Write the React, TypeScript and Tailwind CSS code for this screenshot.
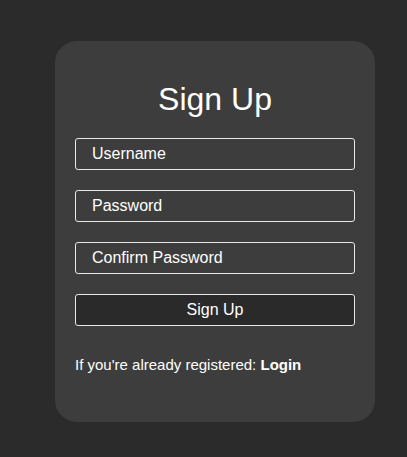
export default function App() {
  return (
    <div
      className="min-h-screen bg-[#2b2b2b] pt-[41px] pl-[55px]"
      style={{ fontFamily: '"Liberation Sans", Arial, sans-serif' }}
    >
      <form className="w-[320px] h-[381px] rounded-[22px] bg-[#3d3d3d] px-5 pt-10 flex flex-col">
        <h1 className="text-[32px] leading-[37px] text-center text-white">Sign Up</h1>
        <input
          type="text"
          placeholder="Username"
          className="mt-5 h-8 w-full rounded-[3px] border border-[#e8e8e8] bg-transparent pl-4 text-base text-white placeholder:text-white outline-none"
        />
        <input
          type="password"
          placeholder="Password"
          className="mt-5 h-8 w-full rounded-[3px] border border-[#e8e8e8] bg-transparent pl-4 text-base text-white placeholder:text-white outline-none"
        />
        <input
          type="password"
          placeholder="Confirm Password"
          className="mt-5 h-8 w-full rounded-[3px] border border-[#e8e8e8] bg-transparent pl-4 text-base text-white placeholder:text-white outline-none"
        />
        <button
          type="button"
          className="mt-5 h-8 w-full rounded-[3px] border border-[#e8e8e8] bg-[#2a2a2a] text-base text-white"
        >
          Sign Up
        </button>
        <p className="mt-[30px] text-[15px] leading-[17px] text-white">
          If you're already registered: <a className="font-bold cursor-pointer">Login</a>
        </p>
      </form>
    </div>
  );
}
